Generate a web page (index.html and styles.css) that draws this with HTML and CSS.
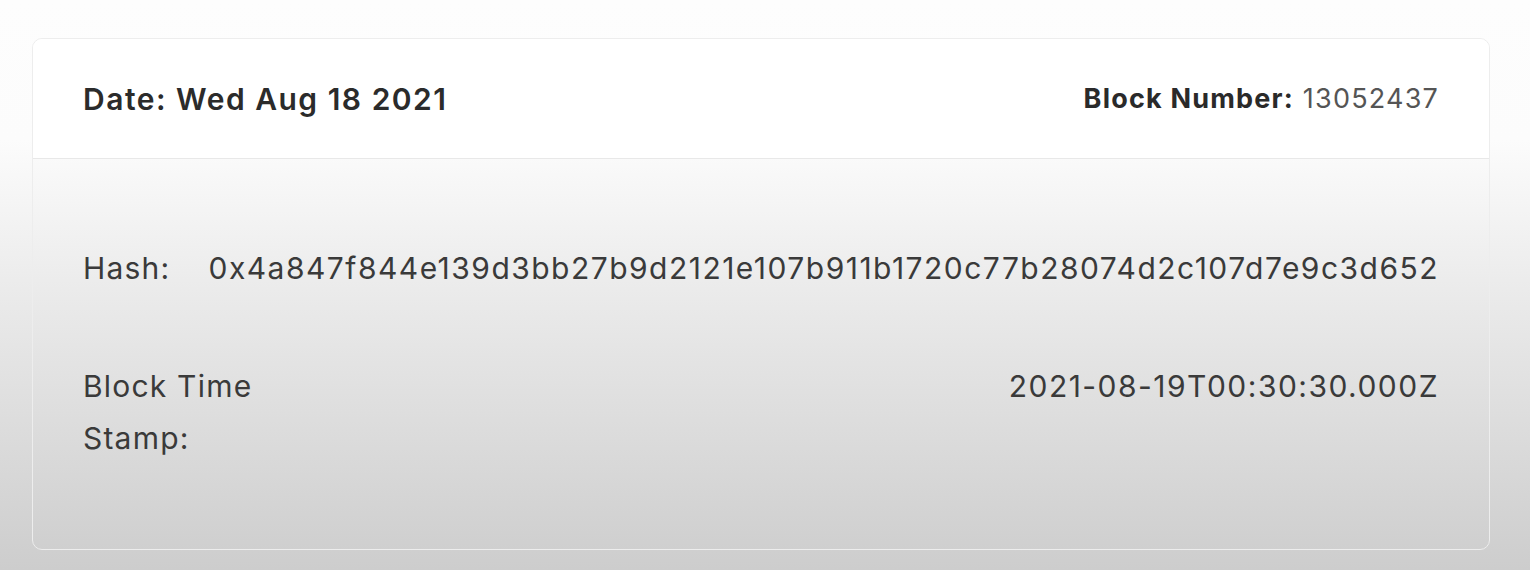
FILE: index.html
```html
<!DOCTYPE html>
<html lang="en">

<head>
    <meta charset="UTF-8">
    <meta name="viewport" content="width=device-width, initial-scale=1.0">
    <title>Block Details</title>
    <link rel="stylesheet" href="styles.css">
</head>

<body>
    <div class="card">
        <div class="card-header">
            <h2 class="date">Date: Wed Aug 18 2021</h2>
            <p class="block-number"><b>Block Number:</b> 13052437</p>
        </div>

        <div class="card-body">
            <div class="row">
                <span class="label">Hash:</span>
                <span class="value">0x4a847f844e139d3bb27b9d2121e107b911b1720c77b28074d2c107d7e9c3d652</span>
            </div>
            <div class="row">
                <span class="label">Block Time Stamp:</span>
                <span class="value">2021-08-19T00:30:30.000Z</span>
            </div>
        </div>
    </div>
</body>

</html>
```

FILE: styles.css
```css
body {
    margin: 0;
    padding: 38px 40px 20px 32px;
    height: 570px;
    box-sizing: border-box;
    background: linear-gradient(to bottom, #fdfdfd 0, #fcfcfc 140px, #ececec 280px, #cdcdcd 570px);
    font-family: Inter, "Noto Sans", sans-serif;
    color: #333;
}

.card {
    border: 1px solid #ededed;
    border-radius: 10px;
    overflow: hidden;
    height: 512px;
    box-sizing: border-box;
}

.card-header {
    display: flex;
    justify-content: space-between;
    align-items: center;
    height: 120px;
    box-sizing: border-box;
    padding: 0 50px;
    background: #fff;
    border-bottom: 1px solid #e8e8e8;
}

.date {
    margin: 0;
    font-size: 30px;
    font-weight: 600;
    letter-spacing: 1.5px;
    color: #2b2b2b;
}

.block-number {
    margin: 0;
    font-size: 27px;
    letter-spacing: 1.2px;
    color: #555;
}

.block-number b {
    font-weight: 700;
    color: #2a2a2a;
}

.card-body {
    padding: 83px 50px 0;
}

.row {
    display: flex;
    justify-content: space-between;
    font-size: 30px;
    line-height: 52px;
    letter-spacing: 1.2px;
    color: #3a3a3a;
    margin-bottom: 66px;
}

.label {
    width: 200px;
}

.value {
    margin-left: 35px;
    white-space: nowrap;
    letter-spacing: 1.48px;
}
```
